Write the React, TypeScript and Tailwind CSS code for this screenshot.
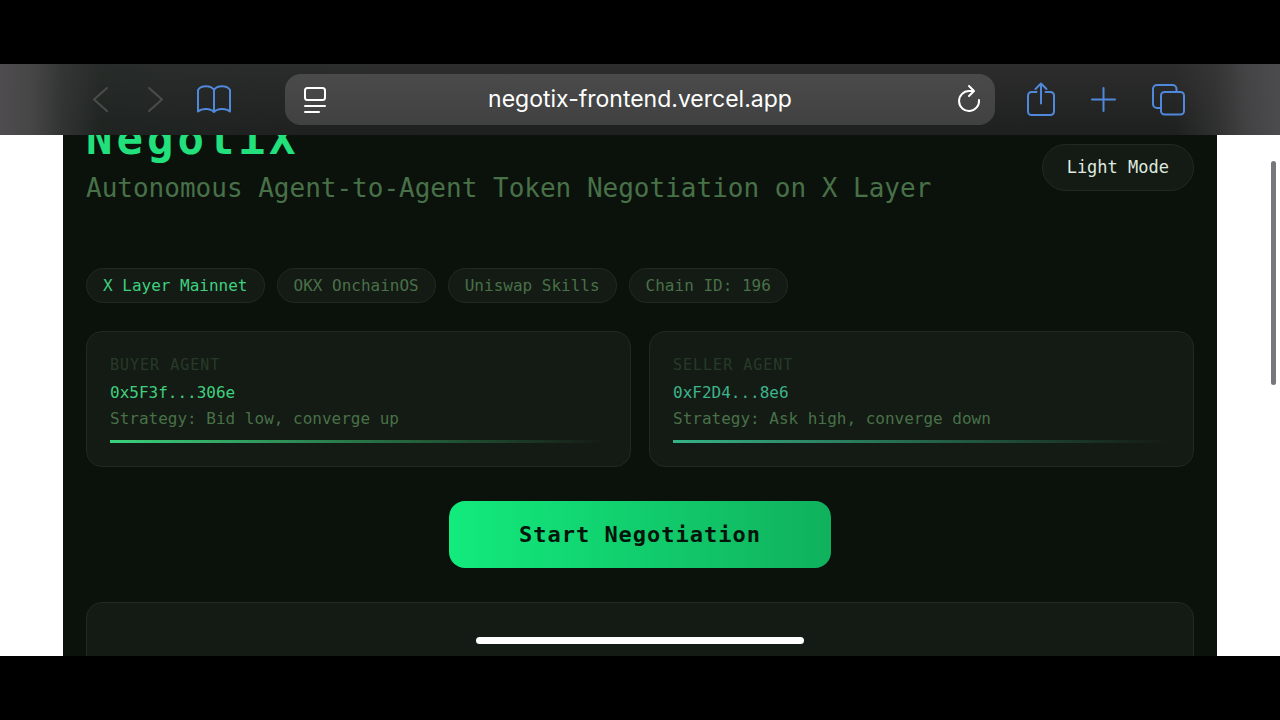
import type { ReactNode } from "react"

const chips = [
{ label:"X Layer Mainnet", active:true },
{ label:"OKX OnchainOS", active:false },
{ label:"Uniswap Skills", active:false },
{ label:"Chain ID: 196", active:false },
]

const agents = [
{
role:"BUYER AGENT",
address:"0x5F3f...306e",
strategy:"Strategy: Bid low, converge up",
text:"text-[#3fd07f]",
bar:"from-[#3bd17c]",
},
{
role:"SELLER AGENT",
address:"0xF2D4...8e6",
strategy:"Strategy: Ask high, converge down",
text:"text-[#3db489]",
bar:"from-[#36b386]",
},
]

function ToolButton({ label, children }:{ label:string, children:ReactNode }){

return(
<button aria-label={label} className="w-9 h-10 flex items-center justify-center shrink-0">
{children}
</button>
)

}

function Toolbar(){

return(

<header className="h-[71px] shrink-0 flex items-center pl-[83px] pr-[95px] bg-[linear-gradient(to_right,#4e4c4e_0px,#4a494aee_30px,#3d3d3d99_62px,transparent_100px,transparent_calc(100%_-_105px),#3d3d3d88_calc(100%_-_65px),#4a494bcc_calc(100%_-_35px),#4c4b4d_100%),linear-gradient(to_right,#1f2a2488,transparent_420px),linear-gradient(to_bottom,#2d2d2d,#1e1f1f)]">

<nav className="flex gap-5">

<ToolButton label="Back">
<svg width="36" height="36" viewBox="0 0 36 36" fill="none" stroke="#4a4d4c" strokeWidth="2" strokeLinecap="round" strokeLinejoin="round">
<path d="M24 6 L11 17.500 L24 29" />
</svg>
</ToolButton>

<ToolButton label="Forward">
<svg width="36" height="36" viewBox="0 0 36 36" fill="none" stroke="#4a4d4c" strokeWidth="2" strokeLinecap="round" strokeLinejoin="round">
<path d="M10 6 L23 17.500 L10 29" />
</svg>
</ToolButton>

<ToolButton label="Bookmarks">
<svg width="36" height="36" viewBox="0 0 36 36" fill="none" stroke="#5089dc" strokeWidth="2" strokeLinecap="round" strokeLinejoin="round">
<path d="M19 8 C16 3 6 3 3 8 V29.500 C7 26 15.500 26 19 30 C22.500 26 31 26 35 29.500 V8 C32 3 22 3 19 8 V30" />
</svg>
</ToolButton>

</nav>

<div className="flex-1 h-[51px] ml-[54px] mr-7 px-2 flex items-center justify-between rounded-2xl bg-linear-to-b from-[#4a4a4a] to-[#414141] text-white">

<ToolButton label="Page menu">
<svg width="36" height="36" viewBox="0 0 36 36" fill="none" stroke="currentColor" strokeWidth="2" strokeLinecap="round" strokeLinejoin="round">
<rect x="12" y="6" width="20" height="12" rx="2.500" />
<path d="M12 24 H32 M12 30 H26" />
</svg>
</ToolButton>

<span className="font-['Inter',sans-serif] text-[23px]">
negotix-frontend.vercel.app
</span>

<ToolButton label="Reload">
<svg width="36" height="36" viewBox="0 0 36 36" fill="none" stroke="currentColor" strokeWidth="2" strokeLinecap="round" strokeLinejoin="round">
<path d="M22 9 H18 A10 10 0 1 0 28 18" />
<path d="M18 4 L23 9 L18 14" />
</svg>
</ToolButton>

</div>

<div className="flex gap-[27px]">

<ToolButton label="Share">
<svg width="36" height="36" viewBox="0 0 36 36" fill="none" stroke="#5089dc" strokeWidth="2" strokeLinecap="round" strokeLinejoin="round">
<path d="M13.500 10 H8.500 A3.500 3.500 0 0 0 5 13.500 V29.500 A3.500 3.500 0 0 0 8.500 33 H27.500 A3.500 3.500 0 0 0 31 29.500 V13.500 A3.500 3.500 0 0 0 27.500 10 H22.500" />
<path d="M18 21.500 V1.500 M12.500 7 L18 1.500 L23.500 7" />
</svg>
</ToolButton>

<ToolButton label="New tab">
<svg width="36" height="36" viewBox="0 0 36 36" fill="none" stroke="#5089dc" strokeWidth="2" strokeLinecap="round">
<path d="M17.500 6 V29 M6 17.500 H29" />
</svg>
</ToolButton>

<ToolButton label="Tabs">
<svg width="36" height="36" viewBox="0 0 36 36" fill="none" stroke="#5089dc" strokeWidth="2" strokeLinejoin="round">
<rect x="12" y="10" width="23" height="22.500" rx="3.500" />
<path d="M12 26 H8 A4 4 0 0 1 4 22 V7 A4 4 0 0 1 8 3 H23.500 A4 4 0 0 1 27.500 7 V10" />
</svg>
</ToolButton>

</div>

</header>

)

}

function AgentCard({ agent }:{ agent:typeof agents[number] }){

return(

<section className="bg-[#141a14] border border-[#1f2b21] rounded-2xl p-[23px]">

<h2 className="text-[15px] leading-5 tracking-[1px] text-[#273a28]">{agent.role}</h2>

<p className={`mt-[6px] text-base ${agent.text}`}>{agent.address}</p>

<p className="mt-0.5 text-base text-[#487148]">{agent.strategy}</p>

<div className={`mt-[9px] h-[3px] bg-linear-to-r to-transparent ${agent.bar}`} />

</section>

)

}

export default function App(){

return(

<div className="h-screen flex flex-col bg-black py-16">

<div className="relative flex-1 min-h-0 flex flex-col overflow-hidden bg-white">

<Toolbar />

{/* Web page, scrolled down a little */}

<div className="flex-1 min-h-0 overflow-hidden mx-[63px] px-[23px] bg-[#0b120c] font-['DejaVu_Sans_Mono',monospace]">

<div className="-mt-[19px] flex justify-between items-start">

<div>
<h1 className="text-[44px] leading-[46px] font-bold tracking-[4px] text-[#22e07c]">
NegotiX
</h1>
<p className="mt-[10px] text-[26px] leading-8 text-[#487148]">
Autonomous Agent-to-Agent Token Negotiation on X Layer
</p>
</div>

<button className="mt-7 h-[47px] px-6 shrink-0 rounded-full bg-[#141a14] border border-[#1f2b21] text-[17px] text-[#dfe9df]">
Light Mode
</button>

</div>

<ul className="mt-16 flex gap-3">
{chips.map((c)=>(
<li
key={c.label}
className={`h-[35px] px-4 flex items-center rounded-full bg-[#141a14] border border-[#1f2b21] text-base ${c.active ? "text-[#3fd07f]" : "text-[#487148]"}`}
>
{c.label}
</li>
))}
</ul>

<div className="mt-7 grid grid-cols-2 gap-[18px]">
{agents.map((a)=>(
<AgentCard key={a.role} agent={a} />
))}
</div>

<div className="mt-[34px] flex justify-center">
<button className="h-[67px] px-[70px] rounded-2xl bg-linear-to-r from-[#12eb7d] to-[#10b15d] text-[22px] font-bold tracking-[1px] text-[#04140a]">
Start Negotiation
</button>
</div>

<section className="mt-[34px] h-60 rounded-2xl bg-[#141a14] border border-[#1f2b21]" />

</div>

{/* Scroll bar and home indicator */}

<div className="absolute right-1 top-[97px] w-[5px] h-56 rounded-full bg-[#77767a]" />
<div className="absolute bottom-3 left-1/2 -translate-x-1/2 w-[328px] h-[7px] rounded-full bg-white" />

</div>

</div>

)

}
